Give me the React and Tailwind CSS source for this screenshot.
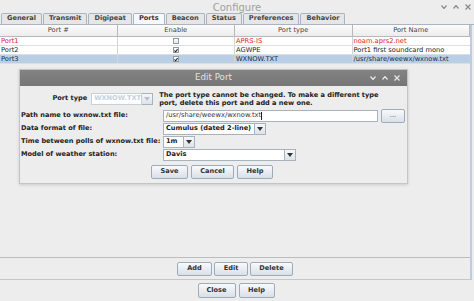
import React from 'react';

const tabs = ['General', 'Transmit', 'Digipeat', 'Ports', 'Beacon', 'Status', 'Preferences', 'Behavior'];

const ports = [
  { id: 'Port1', enabled: false, type: 'APRS-IS', name: 'noam.aprs2.net', red: true },
  { id: 'Port2', enabled: true, type: 'AGWPE', name: 'Port1 first soundcard mono' },
  { id: 'Port3', enabled: true, type: 'WXNOW.TXT', name: '/usr/share/weewx/wxnow.txt', selected: true },
];

const Btn = ({ children, className = '' }) => (
  <div
    className={`h-[14px] flex items-center justify-center border border-[#9eabb9] rounded-[2px] bg-linear-to-b from-[#f8fafc] to-[#d9e0e8] text-[6.6px] font-bold text-[#333] ${className}`}
  >
    {children}
  </div>
);

const Arrow = ({ light }) => (
  <svg width="6" height="4" viewBox="0 0 6 4">
    <path d="M0 0 L6 0 L3 4 Z" fill={light ? '#b8c0c8' : '#333'} />
  </svg>
);

const Combo = ({ text, textW, disabled }) => (
  <div className="flex h-[12px]">
    <div
      className={`${textW} h-full flex items-center px-[2px] border bg-white text-[6.6px] font-bold ${
        disabled ? 'text-[#c2d0de] border-[#c8d0d8]' : 'text-[#222] border-[#a8b2bc]'
      }`}
    >
      {text}
    </div>
    <div className="w-[11px] h-full flex items-center justify-center border border-l-0 border-[#a8b2bc] bg-linear-to-b from-[#f6f8fa] to-[#dde3e9]">
      <Arrow light={disabled} />
    </div>
  </div>
);

const Check = ({ on }) => (
  <div className="w-[6px] h-[6px] border border-[#8e98a2] bg-linear-to-b from-white to-[#e4e8ec] flex items-center justify-center">
    {on && (
      <svg width="5" height="5" viewBox="0 0 5 5">
        <path d="M0.5 2.5 L2 4 L4.5 0.8" stroke="#222" strokeWidth="1.3" fill="none" />
      </svg>
    )}
  </div>
);

const Controls = ({ color }) => (
  <div className={`flex items-center gap-[6px] ${color}`}>
    <svg width="6" height="4" viewBox="0 0 6 4"><path d="M0.5 0.5 L3 3.5 L5.5 0.5" stroke="currentColor" strokeWidth="1.2" fill="none" /></svg>
    <svg width="6" height="4" viewBox="0 0 6 4"><path d="M0.5 3.5 L3 0.5 L5.5 3.5" stroke="currentColor" strokeWidth="1.2" fill="none" /></svg>
    <svg width="6" height="6" viewBox="0 0 6 6"><path d="M0.5 0.5 L5.5 5.5 M5.5 0.5 L0.5 5.5" stroke="currentColor" strokeWidth="1.2" fill="none" /></svg>
  </div>
);

const FormRow = ({ label, children }) => (
  <div className="flex items-center h-[13px]">
    <div className="w-[142px] text-[6.6px] font-bold text-[#222] whitespace-nowrap">{label}</div>
    {children}
  </div>
);

export default function App() {
  return (
    <div className="relative w-[474px] h-[301px] overflow-hidden bg-[#ededed] font-['DejaVu_Sans',sans-serif] text-[#222]">
      {/* Title bar */}
      <div className="h-[14px] flex items-center justify-center relative">
        <span className="text-[10px] text-[#a0a0a0]">Configure</span>
        <div className="absolute right-[3px] top-[4px]">
          <Controls color="text-[#8a8a8a]" />
        </div>
      </div>

      {/* Tabs */}
      <div className="h-[11px] flex items-end pl-[1px] gap-[1px] border-b border-[#a9b4c0]">
        {tabs.map((t) => (
          <div
            key={t}
            className={`h-[11px] px-[5px] flex items-center text-[6.6px] font-bold border border-b-0 border-[#aab4be] rounded-t-[2px] ${
              t === 'Ports' ? 'bg-[#f6f8fa] text-[#333]' : 'bg-[#e6e6e6] text-[#444]'
            }`}
          >
            {t}
          </div>
        ))}
      </div>

      {/* Tab panel */}
      <div className="w-[472px] h-[255px] flex flex-col border-r-2 border-[#b9cde3] border-b border-b-[#c6c6c6]">
        <div className="h-[233px] border-b border-[#bdbdbd] flex flex-col">
          {/* Table header */}
          <div className="grid grid-cols-4 h-[12px] bg-linear-to-b from-[#fcfcfc] to-[#ececec] border-b border-[#b8b8b8]">
            {['Port #', 'Enable', 'Port type', 'Port Name'].map((h) => (
              <div key={h} className="flex items-center justify-center border-r border-[#b8b8b8] text-[6.7px] text-[#444]">
                {h}
              </div>
            ))}
          </div>
          {ports.map((p) => (
            <div
              key={p.id}
              className={`grid grid-cols-4 h-[9px] text-[6.7px] leading-none border-b border-[#dedede] ${
                p.selected ? 'bg-[#b8cfe6] text-[#1c2c48]' : 'bg-white'
              } ${p.red ? 'text-[#e0201c]' : ''}`}
            >
              <div className="flex items-center border-r border-[#d4d4d4] pl-[1px]">{p.id}</div>
              <div className="flex items-center justify-center border-r border-[#d4d4d4]">
                <Check on={p.enabled} />
              </div>
              <div className="flex items-center border-r border-[#d4d4d4] pl-[1px]">{p.type}</div>
              <div className="flex items-center pl-[1px] whitespace-nowrap">{p.name}</div>
            </div>
          ))}
        </div>
        <div className="flex-1 flex items-center justify-center gap-[2px]">
          <Btn className="w-[35px]">Add</Btn>
          <Btn className="w-[34px]">Edit</Btn>
          <Btn className="w-[43px]">Delete</Btn>
        </div>
      </div>

      {/* Bottom buttons */}
      <div className="w-[472px] flex items-center justify-center gap-[3px] pt-[3px]">
        <Btn className="w-[38px] h-[15px]">Close</Btn>
        <Btn className="w-[36px] h-[15px]">Help</Btn>
      </div>

      {/* Edit Port dialog */}
      <div className="absolute left-[19px] top-[69px] w-[389px] h-[115px] flex flex-col border border-[#c4c4c4] bg-[#ededed] shadow-[0_1px_3px_rgba(0,0,0,0.15)]">
        <div className="h-[16px] flex items-center justify-center relative bg-linear-to-b from-[#838383] to-[#767676]">
          <span className="text-[8.7px] text-[#e2e2e2]">Edit Port</span>
          <div className="absolute right-[7px] top-[5px]">
            <Controls color="text-[#e8e8e8]" />
          </div>
        </div>
        <div className="flex-1 flex flex-col px-[1px] pt-[4px]">
          <div className="h-[17px] flex items-center justify-center gap-[4px] pl-[4px]">
            <span className="text-[6.6px] font-bold">Port type</span>
            <Combo text="WXNOW.TXT" textW="w-[51px]" disabled />
            <div className="text-[6.6px] font-bold leading-[8px] ml-[2px] whitespace-nowrap">
              <div>The port type cannot be changed. To make a different type</div>
              <div>port, delete this port and add a new one.</div>
            </div>
          </div>
          <div className="mt-[2px] flex flex-col">
            <FormRow label="Path name to wxnow.txt file:">
              <div className="w-[215px] h-[12px] flex items-center px-[2px] border border-[#a8b2bc] bg-white text-[6.7px] text-[#333]">
                /usr/share/weewx/wxnow.txt<span className="w-px h-[8px] bg-[#222]" />
              </div>
              <Btn className="w-[24px] h-[13px] ml-[3px] font-normal">...</Btn>
            </FormRow>
            <FormRow label="Data format of file:">
              <Combo text="Cumulus (dated 2-line)" textW="w-[92px]" />
            </FormRow>
            <FormRow label="Time between polls of wxnow.txt file:">
              <Combo text="1m" textW="w-[21px]" />
            </FormRow>
            <FormRow label="Model of weather station:">
              <Combo text="Davis" textW="w-[122px]" />
            </FormRow>
          </div>
          <div className="mt-[4px] flex justify-center gap-[3px] pr-[3px]">
            <Btn className="w-[37px]">Save</Btn>
            <Btn className="w-[43px]">Cancel</Btn>
            <Btn className="w-[36px]">Help</Btn>
          </div>
        </div>
      </div>
    </div>
  );
}
